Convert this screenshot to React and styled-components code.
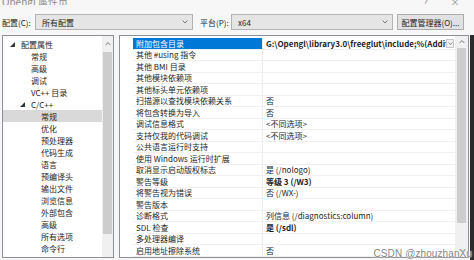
import React from 'react'
import styled, { createGlobalStyle } from 'styled-components'

const GlobalStyle = createGlobalStyle`
  html, body {
    margin: 0;
    padding: 0;
    background: #f7f7f7;
  }
  body {
    font-family: "Noto Sans CJK SC", "Noto Sans", sans-serif;
    font-size: 8px;
    color: #1e1e1e;
  }
`

const Window = styled.div`
  position: relative;
  width: 474px;
  height: 260px;
  overflow: hidden;
  display: flex;
  flex-direction: column;
  background: #f7f7f7;
`

const TitleBar = styled.div`
  height: 5px;
  overflow: hidden;
  display: flex;
  align-items: flex-end;
  justify-content: space-between;
  padding: 0 14px 0 0;
  color: #8a8a8a;
  font-size: 10px;
  line-height: 10px;
`

const TitleText = styled.span`
  margin-left: 2px;
  margin-bottom: -2px;
`

const TitleButtons = styled.span`
  display: flex;
  gap: 22px;
  color: #999;
  margin-bottom: -2px;
`

const Toolbar = styled.div`
  height: 16px;
  margin-top: 9px;
  display: flex;
  align-items: center;
  padding-left: 2px;
`

const Label = styled.span`
  width: ${p => p.$w}px;
  white-space: nowrap;
`

const Select = styled.div`
  width: ${p => p.$w}px;
  height: 16px;
  box-sizing: border-box;
  background: #e5e5e5;
  border: 1px solid #b4b4b4;
  display: flex;
  align-items: center;
  justify-content: space-between;
  padding: 0 4px 0 6px;
  margin-right: ${p => p.$mr}px;
`

const Button = styled.div`
  width: 67px;
  height: 16px;
  box-sizing: border-box;
  background: #e1e1e1;
  border: 1px solid #adadad;
  display: flex;
  align-items: center;
  justify-content: center;
  white-space: nowrap;
`

const Body = styled.div`
  flex: 1;
  margin-top: 5px;
  display: flex;
  min-height: 0;
`

const TreePanel = styled.div`
  width: 113px;
  height: 223px;
  margin-left: 2px;
  box-sizing: border-box;
  border: 1px solid #8c8f96;
  background: #fff;
  display: flex;
`

const TreeList = styled.div`
  flex: 1;
  padding-top: 2px;
  overflow: hidden;
`

const TreeRow = styled.div`
  height: 12px;
  display: flex;
  align-items: center;
  padding-left: ${p => 18 + p.$level * 10}px;
  background: ${p => (p.$selected ? '#d9d9d9' : 'transparent')};
  white-space: nowrap;
`

const Arrow = styled.svg`
  width: 5px;
  height: 5px;
  margin-left: -11px;
  margin-right: 6px;
`

const ScrollBar = styled.div`
  width: ${p => p.$w}px;
  background: #f0f0f0;
  display: flex;
  flex-direction: column;
  align-items: center;
`

const ScrollButton = styled.div`
  height: ${p => p.$h}px;
  width: 100%;
  display: flex;
  align-items: center;
  justify-content: center;
`

const Thumb = styled.div`
  width: ${p => p.$w}px;
  height: ${p => p.$h}px;
  background: #cdcdcd;
`

const Spacer = styled.div`
  flex: 1;
`

const GridPanel = styled.div`
  width: 350px;
  height: 223px;
  margin-left: 5px;
  box-sizing: border-box;
  border: 1px solid #8c8f96;
  background: #fff;
  display: flex;
`

const Gutter = styled.div`
  width: 13px;
`

const Grid = styled.div`
  flex: 1;
  padding-top: 2px;
  overflow: hidden;
`

const GridRow = styled.div`
  height: 11.5px;
  box-sizing: border-box;
  display: flex;
  border-bottom: 1px solid #f0f0f0;
`

const NameCell = styled.div`
  width: 130px;
  box-sizing: border-box;
  padding-left: 3px;
  display: flex;
  align-items: center;
  white-space: nowrap;
  overflow: hidden;
  background: ${p => (p.$selected ? '#0078d7' : 'transparent')};
  color: ${p => (p.$selected ? '#fff' : '#1e1e1e')};
  border-right: 1px solid #ececec;
`

const ValueCell = styled.div`
  flex: 1;
  min-width: 0;
  display: flex;
  align-items: center;
  padding-left: 3px;
  font-weight: ${p => (p.$bold ? 700 : 400)};
  white-space: nowrap;
`

const ValueText = styled.span`
  flex: 1;
  overflow: hidden;
`

const DropButton = styled.div`
  width: 8px;
  height: 9px;
  box-sizing: border-box;
  border: 1px solid #c8c8c8;
  background: #f0f0f0;
  display: flex;
  align-items: center;
  justify-content: center;
  margin-right: 1px;
`

const EdgeStrip = styled.div`
  width: 4px;
  margin-left: 1px;
  background: #2a2a2a;
`

const Watermark = styled.div`
  position: absolute;
  right: 2px;
  bottom: 1px;
  font-family: "Liberation Sans", Arial, sans-serif;
  font-size: 10px;
  color: rgba(110, 110, 110, 0.85);
  text-shadow: 0 0 2px #fff, 0 0 1px #fff;
  letter-spacing: 0.1px;
`

const Chevron = ({ up, size = 6, color = '#606060' }) => (
  <svg width={size} height={size * 0.6} viewBox="0 0 10 6">
    <polyline
      points={up ? '1,5 5,1 9,5' : '1,1 5,5 9,1'}
      fill="none"
      stroke={color}
      strokeWidth="1.4"
    />
  </svg>
)

const tree = [
  { text: '配置属性', level: 0, open: true },
  { text: '常规', level: 1 },
  { text: '高级', level: 1 },
  { text: '调试', level: 1 },
  { text: 'VC++ 目录', level: 1 },
  { text: 'C/C++', level: 1, open: true },
  { text: '常规', level: 2, selected: true },
  { text: '优化', level: 2 },
  { text: '预处理器', level: 2 },
  { text: '代码生成', level: 2 },
  { text: '语言', level: 2 },
  { text: '预编译头', level: 2 },
  { text: '输出文件', level: 2 },
  { text: '浏览信息', level: 2 },
  { text: '外部包含', level: 2 },
  { text: '高级', level: 2 },
  { text: '所有选项', level: 2 },
  { text: '命令行', level: 2 },
]

const rows = [
  { name: '附加包含目录', value: 'G:\\Opengl\\library3.0\\freeglut\\include;%(AdditionalIncludeDirectories)', bold: true, selected: true },
  { name: '其他 #using 指令' },
  { name: '其他 BMI 目录' },
  { name: '其他模块依赖项' },
  { name: '其他标头单元依赖项' },
  { name: '扫描源以查找模块依赖关系', value: '否' },
  { name: '将包含转换为导入', value: '否' },
  { name: '调试信息格式', value: '<不同选项>' },
  { name: '支持仅我的代码调试', value: '<不同选项>' },
  { name: '公共语言运行时支持' },
  { name: '使用 Windows 运行时扩展' },
  { name: '取消显示启动版权标志', value: '是 (/nologo)' },
  { name: '警告等级', value: '等级 3 (/W3)', bold: true },
  { name: '将警告视为错误', value: '否 (/WX-)' },
  { name: '警告版本' },
  { name: '诊断格式', value: '列信息 (/diagnostics:column)' },
  { name: 'SDL 检查', value: '是 (/sdl)', bold: true },
  { name: '多处理器编译' },
  { name: '启用地址擦除系统', value: '否' },
]

export default function App() {
  return (
    <Window>
      <GlobalStyle />
      <TitleBar>
        <TitleText>Opengl 属性页</TitleText>
        <TitleButtons>
          <span>?</span>
          <span>×</span>
        </TitleButtons>
      </TitleBar>

      <Toolbar>
        <Label $w={33}>配置(C):</Label>
        <Select $w={158} $mr={7}>
          <span>所有配置</span>
          <Chevron />
        </Select>
        <Label $w={31}>平台(P):</Label>
        <Select $w={162} $mr={4}>
          <span>x64</span>
          <Chevron />
        </Select>
        <Button>配置管理器(O)...</Button>
      </Toolbar>

      <Body>
        <TreePanel>
          <TreeList>
            {tree.map((item, i) => (
              <TreeRow key={i} $level={item.level} $selected={item.selected}>
                {item.open && (
                  <Arrow viewBox="0 0 5 5">
                    <polygon points="5,0 5,5 0,5" fill="#333" />
                  </Arrow>
                )}
                {item.text}
              </TreeRow>
            ))}
          </TreeList>
          <ScrollBar $w={11}>
            <ScrollButton $h={16}>
              <Chevron up />
            </ScrollButton>
            <Thumb $w={9} $h={182} />
          </ScrollBar>
        </TreePanel>

        <GridPanel>
          <Gutter />
          <Grid>
            {rows.map((row, i) => (
              <GridRow key={i}>
                <NameCell $selected={row.selected}>{row.name}</NameCell>
                <ValueCell $bold={row.bold}>
                  <ValueText>{row.value}</ValueText>
                  {row.selected && (
                    <DropButton>
                      <Chevron size={5} />
                    </DropButton>
                  )}
                </ValueCell>
              </GridRow>
            ))}
          </Grid>
          <ScrollBar $w={13}>
            <ScrollButton $h={12}>
              <Chevron up />
            </ScrollButton>
            <Thumb $w={9} $h={175} />
            <Spacer />
            <ScrollButton $h={12}>
              <Chevron />
            </ScrollButton>
          </ScrollBar>
        </GridPanel>
        <EdgeStrip />
      </Body>

      <Watermark>CSDN @zhouzhanXu</Watermark>
    </Window>
  )
}
